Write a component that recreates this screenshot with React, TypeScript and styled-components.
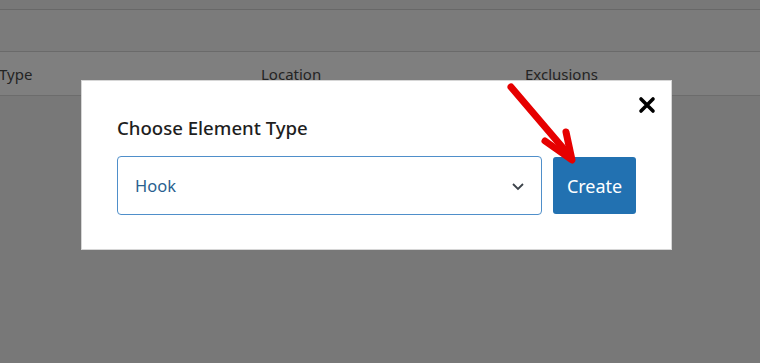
import React from 'react';
import styled, { createGlobalStyle } from 'styled-components';

const GlobalStyle = createGlobalStyle`
  html, body {
    margin: 0;
    padding: 0;
    background: #787878;
    font-family: "Noto Sans", "Open Sans", Arial, sans-serif;
  }
  #root {
    position: relative;
    width: 760px;
    height: 363px;
    overflow: hidden;
  }
`;

const Page = styled.div`
  display: flex;
  flex-direction: column;
  height: 363px;
  background: #787878;
`;

const TopStrip = styled.div`
  height: 9px;
  border-bottom: 1px solid #686868;
`;

const Toolbar = styled.div`
  height: 41px;
  border-bottom: 1px solid #6a6a6a;
  background: #7b7b7b;
`;

const HeaderRow = styled.div`
  display: grid;
  grid-template-columns: 261px 264px 1fr;
  align-items: center;
  height: 43px;
  background: #7f7f7f;
  border-bottom: 1px solid #6c6c6c;
`;

const HeaderCell = styled.div<{ $shift?: number }>`
  font-size: 15px;
  color: #242424;
  padding-top: 1px;
  margin-left: ${p => p.$shift ?? 0}px;
`;

const Overlay = styled.div`
  position: absolute;
  left: 81px;
  top: 80px;
  width: 591px;
  height: 170px;
  box-sizing: border-box;
  background: #fff;
  border: 1px solid #d6d6d6;
  padding: 34px 35px 0 35px;
  display: flex;
  flex-direction: column;
`;

const Title = styled.h2`
  margin: 0;
  font-size: 18.6px;
  font-weight: 500;
  color: #1e1e1e;
  line-height: 26px;
`;

const FormRow = styled.div`
  display: flex;
  align-items: center;
  gap: 11px;
  margin-top: 15px;
`;

const SelectBox = styled.div`
  position: relative;
  width: 426px;
  height: 59px;
  box-sizing: border-box;
  border: 1px solid #4f8fca;
  border-radius: 4px;
  display: flex;
  align-items: center;
  padding: 0 16px 0 17px;
  justify-content: space-between;
`;

const SelectValue = styled.span`
  font-size: 16.5px;
  color: #2a5f8f;
`;

const CreateButton = styled.button`
  width: 83px;
  height: 57px;
  border: none;
  border-radius: 3px;
  background: #2271b1;
  color: #fff;
  font-family: inherit;
  font-size: 18px;
  padding: 0;
  cursor: pointer;
`;

const CloseButton = styled.button`
  position: absolute;
  top: 13px;
  right: 13px;
  width: 22px;
  height: 22px;
  padding: 0;
  border: none;
  background: transparent;
  display: flex;
  align-items: center;
  justify-content: center;
`;

const Annotation = styled.svg`
  position: absolute;
  left: 0;
  top: 0;
  pointer-events: none;
`;

export default function App() {
  return (
    <>
      <GlobalStyle />
      <Page>
        <TopStrip />
        <Toolbar />
        <HeaderRow>
          <HeaderCell $shift={-1}>Type</HeaderCell>
          <HeaderCell>Location</HeaderCell>
          <HeaderCell>Exclusions</HeaderCell>
        </HeaderRow>
      </Page>
      <Overlay>
        <CloseButton aria-label="Close">
          <svg width="18" height="18" viewBox="0 0 18 18">
            <path d="M3 3 L15 15 M15 3 L3 15" stroke="#000" strokeWidth="3.6" strokeLinecap="round" />
          </svg>
        </CloseButton>
        <Title>Choose Element Type</Title>
        <FormRow>
          <SelectBox>
            <SelectValue>Hook</SelectValue>
            <svg width="14" height="10" viewBox="0 0 14 10">
              <path d="M2 3 L7 8 L12 3" fill="none" stroke="#3c434a" strokeWidth="1.8" />
            </svg>
          </SelectBox>
          <CreateButton>Create</CreateButton>
        </FormRow>
      </Overlay>
      <Annotation width="760" height="363" viewBox="0 0 760 363">
        <path d="M511 87 L569 155" stroke="#e60000" strokeWidth="7" strokeLinecap="round" fill="none" />
        <path d="M545 141 L572 160 L566 132" stroke="#e60000" strokeWidth="7" strokeLinecap="round" strokeLinejoin="round" fill="none" />
      </Annotation>
    </>
  );
}
